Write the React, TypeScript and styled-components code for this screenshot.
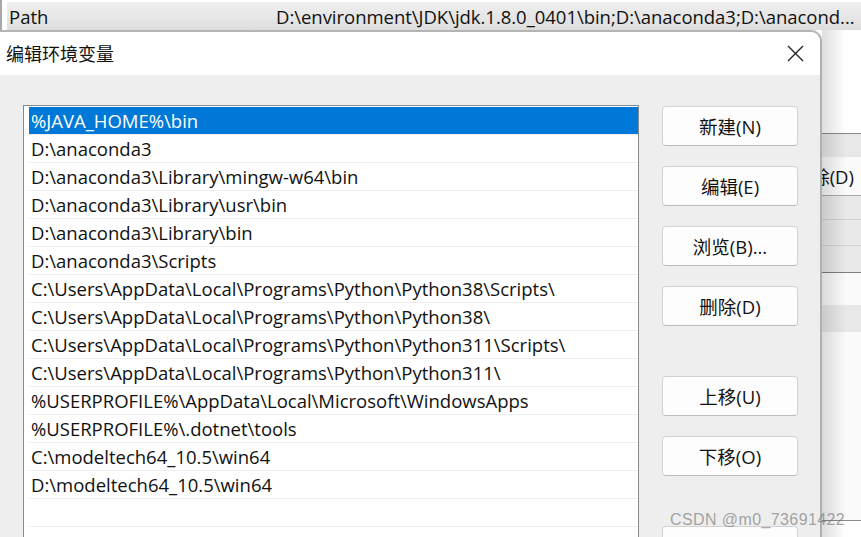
import React from 'react';
import styled, { createGlobalStyle } from 'styled-components';

const GlobalStyle = createGlobalStyle`
  html, body {
    margin: 0;
    padding: 0;
    background: #fff;
  }
  body {
    font-family: 'Open Sans', 'Noto Sans CJK SC', sans-serif;
    color: #111;
  }
`;

const Page = styled.div`
  position: relative;
  width: 861px;
  height: 537px;
  overflow: hidden;
  background: #fff;
`;

const PathRow = styled.div`
  height: 30px;
  padding: 2px 0 0 5px;
  box-sizing: border-box;
  border-left: 2px solid #a8a8a8;
  display: flex;
  align-items: stretch;
`;

const PathFill = styled.div`
  flex: 1;
  display: flex;
  align-items: center;
  background: linear-gradient(180deg, #efefef, #e0e0e0 90%, #dcdcdc);
  font-size: 18.5px;
  padding-left: 2px;
`;

const PathName = styled.span`
  width: 267px;
`;

const PathValue = styled.span`
  white-space: nowrap;
  letter-spacing: -0.03px;
`;

const Stage = styled.div`
  display: flex;
  align-items: stretch;
  height: 507px;
`;

const Dialog = styled.div`
  width: 822px;
  flex: none;
  box-sizing: border-box;
  border-top: 2px solid #b4b4b4;
  border-right: 2px solid #b0b0b0;
  border-top-right-radius: 11px;
  background: #eee;
  overflow: hidden;
  position: relative;
  z-index: 1;
`;

const TitleBar = styled.div`
  height: 43px;
  background: #fff;
  display: flex;
  align-items: center;
  justify-content: space-between;
  padding: 0 16px 0 6px;
`;

const Title = styled.span`
  font-size: 18px;
  margin-top: -1px;
`;

const CloseIcon = styled.svg`
  width: 17px;
  height: 17px;
  stroke: #222;
  stroke-width: 1.4;
  fill: none;
`;

const Body = styled.div`
  display: flex;
  align-items: flex-start;
  padding: 30px 0 0 23px;
`;

const List = styled.div`
  width: 616px;
  height: 460px;
  flex: none;
  box-sizing: border-box;
  background: #fff;
  border: 1px solid #84898e;
  border-bottom: 0;
  padding: 1px 0 0 5px;
`;

const Row = styled.div<{ $selected?: boolean }>`
  height: 28px;
  box-sizing: border-box;
  padding-left: 2px;
  font-size: 18.5px;
  line-height: 27px;
  white-space: nowrap;
  color: ${(p) => (p.$selected ? '#fff' : '#111')};
  background: ${(p) => (p.$selected ? 'linear-gradient(#0078d7 27px, #fff 27px)' : '#fff')};
  border-bottom: 1px solid #eee;
`;

const Buttons = styled.div`
  display: flex;
  flex-direction: column;
  margin: 1px 0 0 23px;
`;

const ActionButton = styled.button<{ $space?: number }>`
  width: 136px;
  height: 40px;
  flex: none;
  margin-top: ${(p) => p.$space ?? 20}px;
  box-sizing: border-box;
  background: #fdfdfd;
  border: 1px solid #d2d2d2;
  border-bottom-color: #bcbcbc;
  border-radius: 4px;
  font: inherit;
  font-size: 18.5px;
  color: #111;
  padding: 0;
`;

const Behind = styled.div`
  flex: 1;
  min-width: 0;
  display: flex;
  flex-direction: column;
  position: relative;
  padding-top: 2px;
`;

const Band = styled.div<{ $height: number; $tone: string; $line?: string }>`
  height: ${(p) => p.$height}px;
  flex: none;
  box-sizing: border-box;
  background: ${(p) => p.$tone};
  border-bottom: 1px solid ${(p) => p.$line ?? 'transparent'};
  display: flex;
  justify-content: flex-end;
  align-items: center;
  white-space: nowrap;
  font-size: 18.5px;
  padding-right: 7px;
`;

const Shadow = styled.div`
  position: absolute;
  inset: 0 auto 0 0;
  width: 24px;
  background: linear-gradient(90deg, rgba(0, 0, 0, 0.13), rgba(0, 0, 0, 0));
`;

const Watermark = styled.div`
  position: absolute;
  left: 670px;
  top: 511px;
  z-index: 2;
  font-family: 'Liberation Sans', sans-serif;
  font-size: 16px;
  letter-spacing: 0.4px;
  color: rgba(110, 110, 110, 0.62);
`;

const rows = [
  '%JAVA_HOME%\\bin',
  'D:\\anaconda3',
  'D:\\anaconda3\\Library\\mingw-w64\\bin',
  'D:\\anaconda3\\Library\\usr\\bin',
  'D:\\anaconda3\\Library\\bin',
  'D:\\anaconda3\\Scripts',
  'C:\\Users\\AppData\\Local\\Programs\\Python\\Python38\\Scripts\\',
  'C:\\Users\\AppData\\Local\\Programs\\Python\\Python38\\',
  'C:\\Users\\AppData\\Local\\Programs\\Python\\Python311\\Scripts\\',
  'C:\\Users\\AppData\\Local\\Programs\\Python\\Python311\\',
  '%USERPROFILE%\\AppData\\Local\\Microsoft\\WindowsApps',
  '%USERPROFILE%\\.dotnet\\tools',
  'C:\\modeltech64_10.5\\win64',
  'D:\\modeltech64_10.5\\win64',
  '',
  '',
];

const actions: { label: string; space?: number }[] = [
  { label: '新建(N)', space: 0 },
  { label: '编辑(E)' },
  { label: '浏览(B)...' },
  { label: '删除(D)' },
  { label: '上移(U)', space: 50 },
  { label: '下移(O)' },
  { label: '', space: 50 },
];

const App: React.FC = () => (
  <Page>
    <GlobalStyle />
    <PathRow>
      <PathFill>
        <PathName>Path</PathName>
        <PathValue>D:\environment\JDK\jdk.1.8.0_0401\bin;D:\anaconda3;D:\anacond...</PathValue>
      </PathFill>
    </PathRow>
    <Stage>
      <Dialog>
        <TitleBar>
          <Title>编辑环境变量</Title>
          <CloseIcon viewBox="0 0 17 17">
            <path d="M1 1 L16 16 M16 1 L1 16" />
          </CloseIcon>
        </TitleBar>
        <Body>
          <List>
            {rows.map((text, i) => (
              <Row key={i} $selected={i === 0}>
                {text}
              </Row>
            ))}
          </List>
          <Buttons>
            {actions.map((a, i) => (
              <ActionButton key={i} $space={a.space}>
                {a.label}
              </ActionButton>
            ))}
          </Buttons>
        </Body>
      </Dialog>
      <Behind>
        <Band $height={102} $tone="#fff" $line="#8a8a8a" />
        <Band $height={23} $tone="#e8e8e8" />
        <Band $height={39} $tone="#fafafa" $line="#a8a8a8">
          删除(D)
        </Band>
        <Band $height={24} $tone="#e8e8e8" $line="#d2d2d2" />
        <Band $height={26} $tone="#e8e8e8" $line="#d2d2d2" />
        <Band $height={27} $tone="#e8e8e8" $line="#7c7c84" />
        <Band $height={32} $tone="#fafafa" />
        <Band $height={27} $tone="#e8e8e8" />
        <Band $height={189} $tone="#fafafa" $line="#8a8a8a" />
        <Shadow />
      </Behind>
    </Stage>
    <Watermark>CSDN @m0_73691422</Watermark>
  </Page>
);

export default App;
